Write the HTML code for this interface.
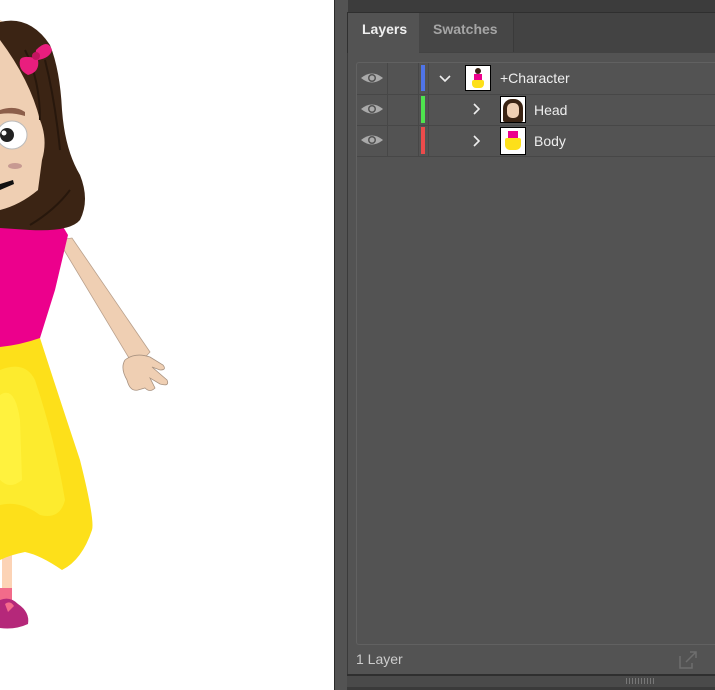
<!DOCTYPE html>
<html><head><style>
body{margin:0;width:715px;height:690px;overflow:hidden;background:#fff;position:relative;font-family:"Liberation Sans",sans-serif}
.p{position:absolute}
</style></head><body>
<svg class="p" style="left:0;top:0" width="334" height="690" viewBox="0 0 334 690">
 <!-- arm -->
 <path d="M58 240 L72 238 L150 352 L135 368 Z" fill="#efcfb3" stroke="#b9a08c" stroke-width="0.8"/>
 <path d="M125 360 Q135 352 150 357 L163 365 Q167 370 160 370 L152 367 L167 380 Q170 387 160 384 L150 378 L155 388 Q150 393 145 388 L138 390 Q130 392 127 380 Q120 368 125 360Z" fill="#efcfb3" stroke="#a89280" stroke-width="0.8"/>
 <!-- leg & shoe -->
 <rect x="2" y="555" width="10" height="40" fill="#fcd3b5"/>
 <rect x="0" y="588" width="12" height="14" fill="#f26b8a"/>
 <path d="M0 600 Q10 596 18 604 Q30 612 28 624 Q15 630 0 628Z" fill="#b5287a"/>
 <path d="M5 604 Q10 600 14 606 L8 612 Z" fill="#f56a8c"/>
 <!-- skirt -->
 <path d="M0 345 L40 338 Q60 400 80 460 Q95 520 92 530 Q82 560 62 570 Q40 555 25 552 Q10 555 0 560Z" fill="#fde01a"/>
 <path d="M0 370 Q25 360 35 380 Q55 440 65 500 Q60 520 40 515 Q20 500 0 505Z" fill="#fdeb2e"/>
 <path d="M0 395 Q15 385 20 420 L22 480 Q10 490 0 480Z" fill="#fff23e"/>
 <!-- shirt -->
 <path d="M0 225 L62 225 L68 235 L55 290 L40 338 Q20 345 0 347Z" fill="#ec008c"/>
 <!-- face -->
 <path d="M0 20 Q30 35 45 100 L45 180 Q30 205 0 210Z" fill="#efcfb3"/>
 <path d="M0 110 Q15 105 25 112 L25 116 Q12 112 0 114Z" fill="#8c5e4a"/>
 <ellipse cx="12" cy="135" rx="15" ry="14" fill="#fff" stroke="#bbb"/>
 <circle cx="7" cy="135" r="7" fill="#222"/>
 <circle cx="4" cy="133" r="2.5" fill="#fff"/>
 <ellipse cx="15" cy="166" rx="7" ry="3" fill="#c79a92"/>
 <path d="M0 184 L13 180 L14 184 L0 190Z" fill="#111"/>
 <!-- hair -->
 <path d="M0 22 Q30 15 50 45 Q60 70 62 110 Q65 150 80 175 Q90 200 80 220 Q70 232 30 230 L0 228 L0 210 Q20 205 38 190 Q40 175 42 160 Q48 140 40 120 Q30 80 0 40Z" fill="#3b2414"/>
 <path d="M25 50 Q40 80 40 120 M45 60 Q55 100 60 150 M30 225 Q55 210 70 190" stroke="#27170c" stroke-width="2" fill="none"/>
 <!-- bow -->
 <path d="M20 60 Q22 55 35 58 L36 50 Q48 38 52 50 Q50 58 38 60 Q40 72 28 75 Q18 70 20 60Z" fill="#e91e7e"/>
 <circle cx="36" cy="56" r="4" fill="#c2155f"/>
</svg>
<div class="p" style="left:334px;top:0;width:1px;height:690px;background:#2b2b2b"></div>
<div class="p" style="left:335px;top:0;width:380px;height:690px;background:#535353"></div>
<div class="p" style="left:348px;top:0;width:367px;height:12px;background:#3c3c3c"></div>
<div class="p" style="left:347px;top:12px;width:368px;height:40px;background:#434343;border-left:1px solid #2f2f2f;border-top:1px solid #2f2f2f"></div>
<div class="p" style="left:348px;top:13px;width:71px;height:40px;background:#535353"></div>
<div class="p" style="left:419px;top:13px;width:94px;height:39px;background:#464646;border-right:1px solid #3a3a3a"></div>
<div class="p" style="left:362px;top:21px;color:#f0f0f0;font-size:14px;font-weight:bold">Layers</div>
<div class="p" style="left:433px;top:21px;color:#a5a5a5;font-size:14px;font-weight:bold">Swatches</div>
<div class="p" style="left:347px;top:53px;width:1px;height:622px;background:#3a3a3a"></div>
<div class="p" style="left:356px;top:62px;width:360px;height:581px;border:1px solid #616161;border-right:none;border-radius:3px 0 0 3px"></div>
<!-- rows -->
<div class="p" style="left:357px;top:94px;width:358px;height:1px;background:#474747"></div>
<div class="p" style="left:357px;top:125px;width:358px;height:1px;background:#474747"></div>
<div class="p" style="left:357px;top:156px;width:358px;height:1px;background:#474747"></div>
<div class="p" style="left:387px;top:63px;width:1px;height:93px;background:#474747"></div>
<div class="p" style="left:418px;top:63px;width:1px;height:93px;background:#474747"></div>
<div class="p" style="left:428px;top:63px;width:1px;height:93px;background:#474747"></div>
<div class="p" style="left:421px;top:65px;width:4px;height:26px;background:#4f74e8"></div>
<div class="p" style="left:421px;top:96px;width:4px;height:27px;background:#4ee44e"></div>
<div class="p" style="left:421px;top:127px;width:4px;height:27px;background:#ec4b4b"></div>
<svg class="p" style="left:360px;top:70px" width="24" height="80">
 <g fill="#aaa"><path d="M1 8 Q12 -1 23 8 Q12 17 1 8Z"/><path d="M1 39 Q12 30 23 39 Q12 48 1 39Z"/><path d="M1 70 Q12 61 23 70 Q12 79 1 70Z"/></g>
 <g fill="#535353"><circle cx="12" cy="8" r="4"/><circle cx="12" cy="39" r="4"/><circle cx="12" cy="70" r="4"/></g>
 <g fill="#aaa"><circle cx="12" cy="8" r="2.5"/><circle cx="12" cy="39" r="2.5"/><circle cx="12" cy="70" r="2.5"/></g>
</svg>
<svg class="p" style="left:438px;top:72px" width="50" height="80" fill="none" stroke="#eee" stroke-width="1.6">
 <path d="M2 4 L7 9 L12 4"/><path d="M36 32 L41 37 L36 42"/><path d="M36 64 L41 69 L36 74"/>
</svg>
<div class="p" style="left:465px;top:65px;width:24px;height:24px;background:#fff;border:1px solid #000;overflow:hidden">
 <div class="p" style="left:9px;top:2px;width:6px;height:6px;background:#3b2414;border-radius:3px"></div>
 <div class="p" style="left:8px;top:8px;width:8px;height:6px;background:#ec008c"></div>
 <div class="p" style="left:6px;top:14px;width:12px;height:8px;background:#fde01a;border-radius:2px 2px 4px 4px"></div>
</div>
<div class="p" style="left:500px;top:96px;width:24px;height:25px;background:#fff;border:1px solid #000;overflow:hidden">
 <div class="p" style="left:2px;top:2px;width:20px;height:23px;background:#3b2414;border-radius:9px 9px 2px 2px"></div>
 <div class="p" style="left:6px;top:6px;width:12px;height:15px;background:#efcfb3;border-radius:5px"></div>
</div>
<div class="p" style="left:500px;top:127px;width:24px;height:26px;background:#fff;border:1px solid #000;overflow:hidden">
 <div class="p" style="left:7px;top:3px;width:10px;height:7px;background:#ec008c"></div>
 <div class="p" style="left:4px;top:10px;width:16px;height:12px;background:#fde01a;border-radius:2px 2px 5px 5px"></div>
</div>
<div class="p" style="left:500px;top:70px;color:#eee;font-size:14px">+Character</div>
<div class="p" style="left:534px;top:102px;color:#eee;font-size:14px">Head</div>
<div class="p" style="left:534px;top:133px;color:#eee;font-size:14px">Body</div>
<div class="p" style="left:356px;top:651px;color:#ccc;font-size:14px">1 Layer</div>
<svg class="p" style="left:678px;top:650px" width="20" height="20" fill="none" stroke="#6e6e6e" stroke-width="1.5"><path d="M2 6 V18 H14 V13"/><path d="M8 12 L18 2 M12 2 H18 V8"/></svg>
<div class="p" style="left:347px;top:674px;width:368px;height:2px;background:#2f2f2f"></div>
<div class="p" style="left:347px;top:676px;width:368px;height:11px;background:#4a4a4a"></div>
<div class="p" style="left:347px;top:687px;width:368px;height:3px;background:#3a3a3a"></div>
<div class="p" style="left:626px;top:678px;width:28px;height:6px;background:repeating-linear-gradient(90deg,#777 0 1px,transparent 1px 3px)"></div>
</body></html>
